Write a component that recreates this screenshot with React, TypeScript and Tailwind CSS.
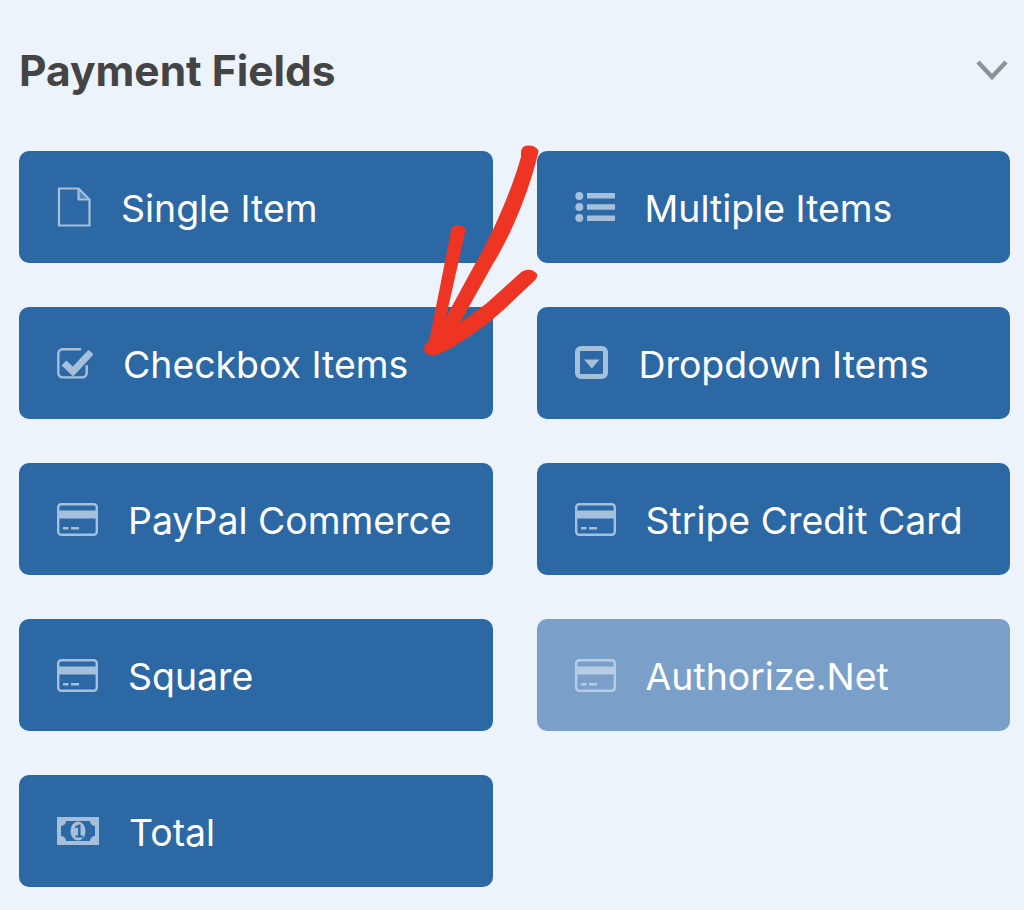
import type { ReactNode } from 'react';

const FileIcon = () => (
  <svg width="34" height="40" viewBox="0 0 34 40" fill="none" stroke="currentColor" strokeWidth="2.2">
    <path d="M2 1.5h19.5L32.5 12.5v26H2z" strokeLinejoin="round" />
    <path d="M21.5 1.5V12.5H32.5" fill="currentColor" fillOpacity="0.35" strokeLinejoin="round" />
  </svg>
);

const ListIcon = () => (
  <svg width="40" height="32" viewBox="0 0 40 32" fill="currentColor">
    <circle cx="4.3" cy="5" r="4" />
    <circle cx="4.3" cy="16" r="4" />
    <circle cx="4.3" cy="27" r="4" />
    <rect x="12" y="2" width="28" height="5.5" />
    <rect x="12" y="13.2" width="28" height="5.5" />
    <rect x="12" y="24.5" width="28" height="5.5" />
  </svg>
);

const CheckboxIcon = () => (
  <svg width="36" height="31" viewBox="0 0 36 31" fill="none">
    <path
      d="M24 1.3H5.5A4.2 4.2 0 0 0 1.3 5.5v19.7a4.2 4.2 0 0 0 4.2 4.2h20a4.2 4.2 0 0 0 4.2-4.2v-8"
      stroke="currentColor"
      strokeWidth="2.4"
    />
    <path d="M7 15l9 8.5L34 4" stroke="currentColor" strokeWidth="7" />
  </svg>
);

const DropdownIcon = () => (
  <svg width="34" height="34" viewBox="0 0 34 34" fill="none">
    <rect x="2.5" y="2.5" width="28" height="28" rx="3.5" stroke="currentColor" strokeWidth="5" />
    <path d="M9 13.5h15.5l-7.7 9z" fill="currentColor" />
  </svg>
);

const CardIcon = () => (
  <svg width="41" height="33" viewBox="0 0 41 33" fill="none">
    <rect x="1.2" y="1.2" width="38.6" height="30.6" rx="3" stroke="currentColor" strokeWidth="2.4" />
    <rect x="2" y="7.5" width="37" height="8" fill="currentColor" />
    <rect x="6" y="24" width="5.5" height="2.5" fill="currentColor" />
    <rect x="14" y="24" width="8" height="2.5" fill="currentColor" />
  </svg>
);

const MoneyIcon = () => (
  <svg width="42" height="28" viewBox="0 0 42 28">
    <path
      fillRule="evenodd"
      fill="currentColor"
      d="M0 0h42v28H0zM9 4a5 5 0 0 1-5 5v10a5 5 0 0 1 5 5h24a5 5 0 0 1 5-5V9a5 5 0 0 1-5-5z"
    />
    <ellipse cx="21" cy="14" rx="7.5" ry="9.5" fill="currentColor" />
    <path d="M18 9.5l4-2h1.5v11H26v2h-7.5v-2H21V10.5l-2.5 1z" fill="#2b68a4" />
  </svg>
);

const FieldButton = ({
  icon,
  label,
  disabled,
}: {
  icon: ReactNode;
  label: string;
  disabled?: boolean;
}) => (
  <div
    className={`flex h-[112px] items-center rounded-[10px] pl-[38px] text-white ${
      disabled ? 'bg-[#7a9fc8]' : 'bg-[#2b68a4]'
    }`}
  >
    <span className={`mr-[30px] flex shrink-0 items-center ${disabled ? 'text-[#b8cce3]' : 'text-[#a6bfdb]'}`}>
      {icon}
    </span>
    <span className="pt-[3px] text-[37.4px] leading-none font-[430]">{label}</span>
  </div>
);

export default function App() {
  return (
    <div className="relative h-[910px] overflow-hidden bg-[#ecf3fb] pl-[19px] pr-[14px] font-['Inter',sans-serif]">
      <div className="flex h-[151px] items-start justify-between pt-[46px]">
        <h2 className="text-[42.5px] leading-[50px] font-bold text-[#444444]">Payment Fields</h2>
        <svg className="mt-[13px] mr-[2px]" width="32" height="22" viewBox="0 0 32 22" fill="none">
          <path d="M2 3l14 15L30 3" stroke="#8b929b" strokeWidth="4.4" />
        </svg>
      </div>

      <div className="grid grid-cols-2 gap-x-[44px] gap-y-[44px]">
        <FieldButton icon={<FileIcon />} label="Single Item" />
        <FieldButton icon={<ListIcon />} label="Multiple Items" />
        <FieldButton icon={<CheckboxIcon />} label="Checkbox Items" />
        <FieldButton icon={<DropdownIcon />} label="Dropdown Items" />
        <FieldButton icon={<CardIcon />} label="PayPal Commerce" />
        <FieldButton icon={<CardIcon />} label="Stripe Credit Card" />
        <FieldButton icon={<CardIcon />} label="Square" />
        <FieldButton icon={<CardIcon />} label="Authorize.Net" disabled />
        <FieldButton icon={<MoneyIcon />} label="Total" />
      </div>

      {/* hand-drawn annotation over the buttons */}
      <svg className="absolute top-[140px] left-[420px] h-[220px] w-[125px]" viewBox="0 0 375 660">
        <path
          fill="#ee3524"
          d="M303 35 Q305 20 318 17 Q345 14 356 32 C335 125 285 265 220 370 L120 548 L200 490 L305 395 Q330 382 350 400 Q356 412 340 425 L250 510 C200 555 150 590 100 620 Q70 638 45 645 Q18 648 12 630 Q12 612 28 600 L60 440 L95 262 Q115 246 138 265 L110 390 L78 532 L165 372 C225 270 280 135 303 50 Z"
        />
      </svg>
    </div>
  );
}
